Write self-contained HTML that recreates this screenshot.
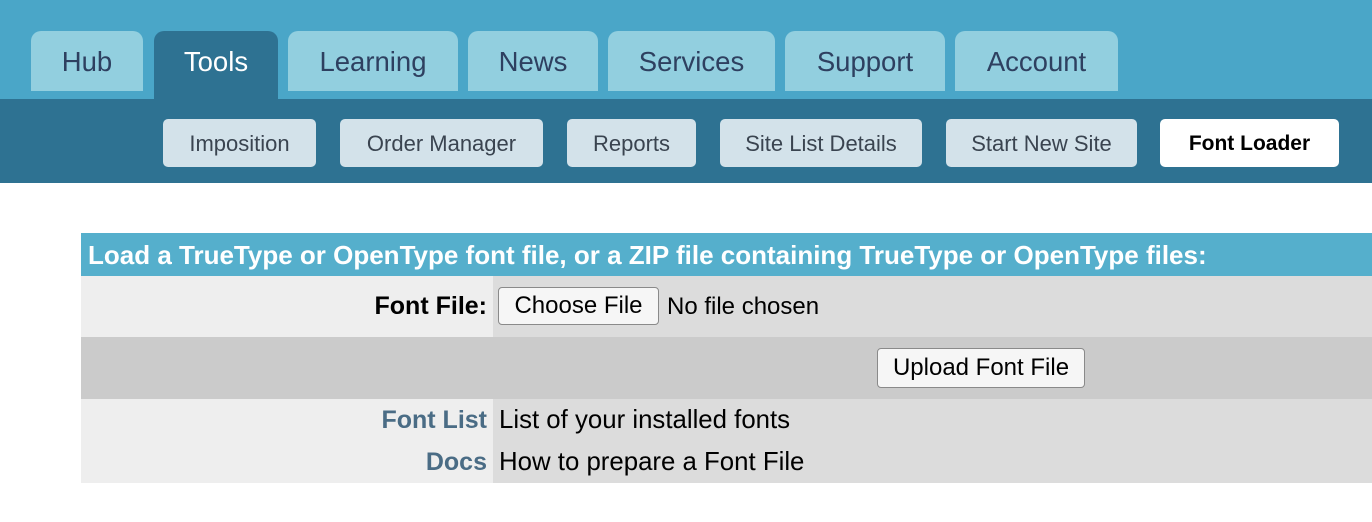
<!DOCTYPE html>
<html><head><style>
*{margin:0;padding:0;box-sizing:border-box}
body{width:1372px;height:522px;background:#fff;font-family:"Liberation Sans",Arial,sans-serif;position:relative;overflow:hidden}
.top{position:absolute;left:0;top:0;width:1372px;height:99px;background:#4aa6c8}
.sub{position:absolute;left:0;top:99px;width:1372px;height:84px;background:#2e7292}
.tab{position:absolute;top:31px;height:60px;background:#92cfdf;border-radius:10px 10px 0 0;color:#2e4060;font-size:27.5px;text-align:center;line-height:62px}
.tab.on{background:#2e7292;color:#fff;height:68px}
.sb{position:absolute;top:119px;height:48px;background:#d3e2ea;border-radius:5px;color:#3a4450;font-size:22px;text-align:center;line-height:50px}
.sb.on{background:#fff;color:#000;font-weight:bold;font-size:21px}
.r{position:absolute;left:81px;width:1291px}
.l{position:absolute;left:0;width:412px;text-align:right;padding-right:6px;font-size:25px;font-weight:bold}
.v{position:absolute;left:412px;right:0;top:0;bottom:0;background:#dcdcdc}
.btn{position:absolute;background:#f6f6f6;border:1px solid #8a8a8a;border-radius:4px;font-size:24px;text-align:center}
.t{position:absolute;left:418px;font-size:25.8px}
</style></head><body>
<div class="top"></div><div class="sub"></div>
<div class="tab" style="left:31px;width:112px">Hub</div>
<div class="tab on" style="left:154px;width:124px">Tools</div>
<div class="tab" style="left:288px;width:170px">Learning</div>
<div class="tab" style="left:468px;width:130px">News</div>
<div class="tab" style="left:608px;width:167px">Services</div>
<div class="tab" style="left:785px;width:160px">Support</div>
<div class="tab" style="left:955px;width:163px">Account</div>
<div class="sb" style="left:163px;width:153px">Imposition</div>
<div class="sb" style="left:340px;width:203px">Order Manager</div>
<div class="sb" style="left:567px;width:129px">Reports</div>
<div class="sb" style="left:720px;width:202px">Site List Details</div>
<div class="sb" style="left:946px;width:191px">Start New Site</div>
<div class="sb on" style="left:1160px;width:179px">Font Loader</div>

<div class="r" style="top:233px;height:43px;background:#55afcc;color:#fff;font-weight:bold;font-size:26px;line-height:44px;padding-left:7px;white-space:nowrap">Load a TrueType or OpenType font file, or a ZIP file containing TrueType or OpenType files:</div>
<div class="r" style="top:276px;height:61px;background:#eeeeee">
 <div class="v"></div>
 <div class="l" style="top:0;line-height:61px;color:#000">Font File:</div>
 <div class="btn" style="left:417px;top:11px;width:161px;height:38px;line-height:36px">Choose File</div>
 <div class="t" style="left:586px;top:0;line-height:61px;font-size:24px">No file chosen</div>
</div>
<div class="r" style="top:337px;height:62px;background:#cbcbcb">
 <div class="btn" style="left:796px;top:11px;width:208px;height:40px;line-height:38px">Upload Font File</div>
</div>
<div class="r" style="top:399px;height:84px;background:#eeeeee">
 <div class="v"></div>
 <div class="l" style="top:0;line-height:42px;color:#4a6c85">Font List</div>
 <div class="t" style="top:0;line-height:42px">List of your installed fonts</div>
 <div class="l" style="top:42px;line-height:42px;color:#4a6c85">Docs</div>
 <div class="t" style="top:42px;line-height:42px">How to prepare a Font File</div>
</div>
</body></html>
